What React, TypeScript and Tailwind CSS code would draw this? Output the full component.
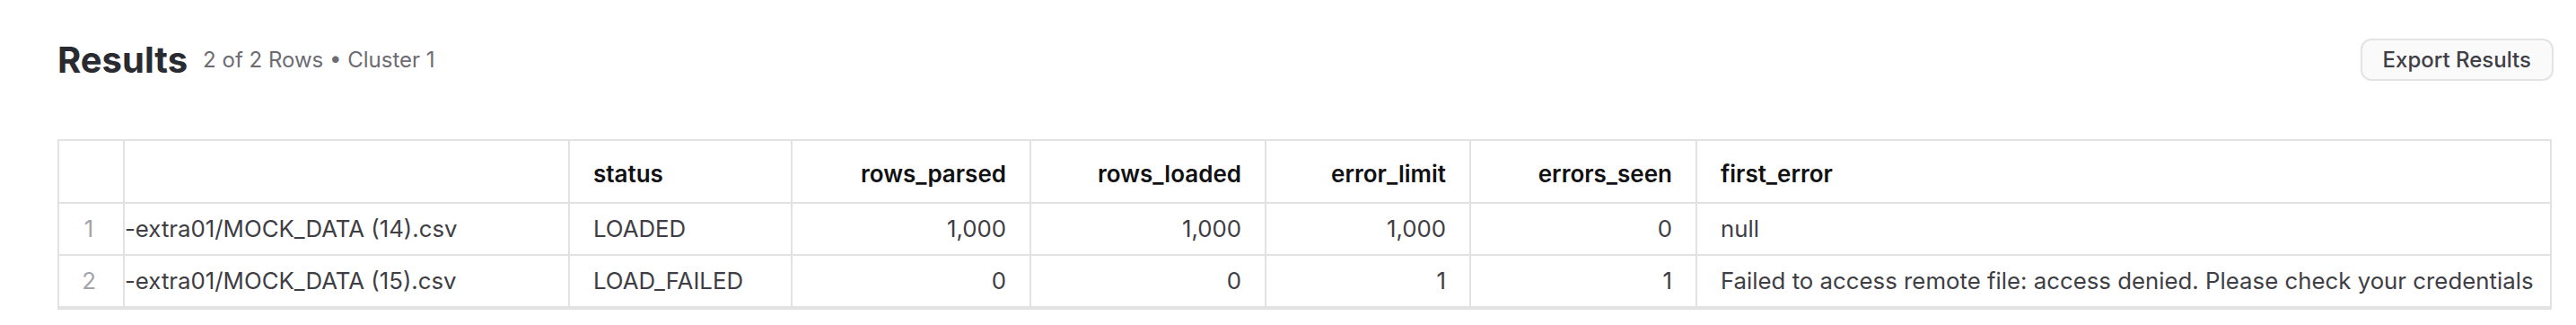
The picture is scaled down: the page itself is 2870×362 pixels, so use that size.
import React from "react";

type Row = {
  file: string;
  status: string;
  rowsParsed: string;
  rowsLoaded: string;
  errorLimit: string;
  errorsSeen: string;
  firstError: string;
};

const rows: Row[] = [
  {
    file: "-extra01/MOCK_DATA (14).csv",
    status: "LOADED",
    rowsParsed: "1,000",
    rowsLoaded: "1,000",
    errorLimit: "1,000",
    errorsSeen: "0",
    firstError: "null",
  },
  {
    file: "-extra01/MOCK_DATA (15).csv",
    status: "LOAD_FAILED",
    rowsParsed: "0",
    rowsLoaded: "0",
    errorLimit: "1",
    errorsSeen: "1",
    firstError: "Failed to access remote file: access denied. Please check your credentials",
  },
];

export default function App() {
  const cell = "border-r-2 border-b-2 border-[#e2e2e2] align-middle whitespace-nowrap overflow-hidden";
  const head = `${cell} h-[70px] pt-[4px] text-[26px] font-semibold text-[#111113]`;
  const body = `${cell} h-[58px] text-[25.8px] text-[#3e3e44]`;

  return (
    <div className="min-h-screen bg-white font-['Inter',sans-serif] pl-[64px] pr-[25px] pt-[43px]">
      {/* header bar */}
      <div className="flex h-[47px] items-center justify-between">
        <div className="flex items-center gap-[17px]">
          <h1 className="text-[40px] font-bold leading-none text-[#2a2b30]">Results</h1>
          <span className="text-[24px] text-[#6c6c72]">2 of 2 Rows • Cluster 1</span>
        </div>
        <button className="h-[47px] rounded-[12px] border-2 border-[#e3e3e3] bg-[#fafafa] px-[23px] text-[24px] font-medium text-[#3f4046]">
          Export Results
        </button>
      </div>

      {/* results table */}
      <table className="mt-[65px] w-[2779px] table-fixed border-separate border-spacing-0 border-l-2 border-t-2 border-[#e2e2e2] shadow-[0_2px_0_#e2e2e2]">
        <colgroup>
          <col className="w-[73px]" />
          <col className="w-[496px]" />
          <col className="w-[248px]" />
          <col className="w-[266px]" />
          <col className="w-[262px]" />
          <col className="w-[228px]" />
          <col className="w-[252px]" />
          <col />
        </colgroup>
        <thead>
          <tr>
            <th className={head} />
            <th className={head} />
            <th className={`${head} px-[26px] text-left`}>status</th>
            <th className={`${head} px-[26px] text-right`}>rows_parsed</th>
            <th className={`${head} px-[26px] text-right`}>rows_loaded</th>
            <th className={`${head} px-[26px] text-right`}>error_limit</th>
            <th className={`${head} px-[26px] text-right`}>errors_seen</th>
            <th className={`${head} px-[26px] text-left`}>first_error</th>
          </tr>
        </thead>
        <tbody>
          {rows.map((r, i) => (
            <tr key={i}>
              <td className={`${body} pr-[5px] text-center text-[#a3a3a8]`}>{i + 1}</td>
              <td className={`${body} pl-0 text-left`}>{r.file}</td>
              <td className={`${body} px-[26px] text-left`}>{r.status}</td>
              <td className={`${body} px-[26px] text-right`}>{r.rowsParsed}</td>
              <td className={`${body} px-[26px] text-right`}>{r.rowsLoaded}</td>
              <td className={`${body} px-[26px] text-right`}>{r.errorLimit}</td>
              <td className={`${body} px-[26px] text-right`}>{r.errorsSeen}</td>
              <td className={`${body} px-[26px] text-left`}>{r.firstError}</td>
            </tr>
          ))}
        </tbody>
      </table>
    </div>
  );
}
